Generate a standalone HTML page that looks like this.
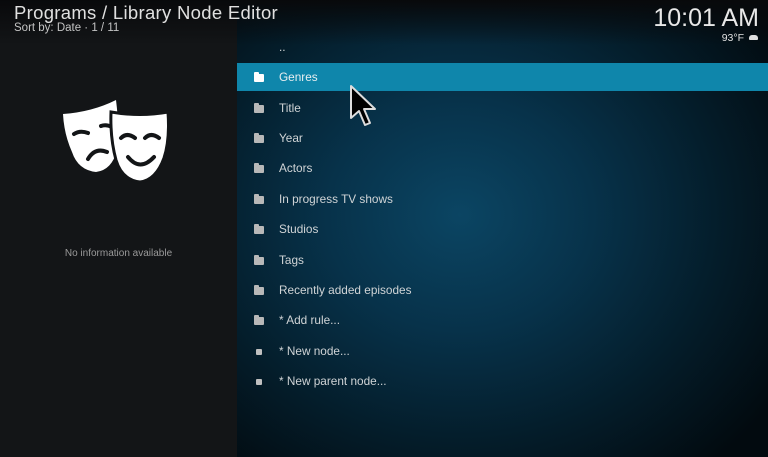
<!DOCTYPE html>
<html><head><meta charset="utf-8"><style>
*{margin:0;padding:0;box-sizing:border-box}
body{width:768px;height:457px;overflow:hidden;background:#02090d;font-family:"Liberation Sans",sans-serif;position:relative}
.bg{position:absolute;left:0;top:0;width:768px;height:457px;background:radial-gradient(ellipse 380px 330px at 460px 215px,#0b4563 0%,#07324a 35%,#041c29 70%,#020a0f 100%)}
.left{position:absolute;left:0;top:0;width:237px;height:457px;background:#131517}
.top{position:absolute;left:0;top:0;width:768px;height:45px;background:linear-gradient(#08090b,rgba(8,9,11,0))}
.title{position:absolute;left:14px;top:2px;font-size:18.5px;color:#e0e0e0;letter-spacing:.3px}
.sort{position:absolute;left:14px;top:22px;font-size:11.5px;color:#c4c4c4}
.clock{position:absolute;right:9px;top:4px;font-size:25px;color:#e8e8e8;font-weight:300}
.temp{position:absolute;right:24px;top:32px;font-size:10.5px;color:#e0e0e0}
.noinfo{position:absolute;left:0;width:237px;top:248px;text-align:center;font-size:10px;color:#9a9a9a}
.row{position:absolute;left:237px;width:531px;height:28px;font-size:11.8px;color:#d0d4d6;line-height:29px}
.row span{position:absolute;left:42px}
.row .ic{position:absolute;left:17px;top:11px;width:10px;height:8px;background:#b8b8b8;border-radius:1px}
.row .ic:before{content:"";position:absolute;left:0;top:-2px;width:5px;height:3px;background:#b8b8b8;border-radius:1px 1px 0 0}
.row .dot{position:absolute;left:19px;top:12px;width:6px;height:6px;background:#c0c0c0;border-radius:1px}
.sel{background:#0f86ab}
.sel span{color:#e8eef0}
.sel .ic,.sel .ic:before{background:#fff}
</style></head><body>
<div class="bg"></div>
<div class="left"></div>
<div class="top"></div>
<div class="title">Programs / Library Node Editor</div>
<div class="sort">Sort by: Date · 1 / 11</div>
<div class="clock">10:01 AM</div>
<div class="temp">93°F</div>
<div style="position:absolute;right:10px;top:35px;width:9px;height:5px;background:#e0e0e0;border-radius:3px 3px 1px 1px"></div>
<svg style="position:absolute;left:0;top:0" width="237" height="200" viewBox="0 0 237 200">
<path d="M63 114 Q92 112 116 100 Q120 132 117 150 Q112 170 96 172 Q78 170 72 152 Q64 134 63 114Z" fill="#fff"/>
<path d="M74 134 Q80 130 88 133" stroke="#131517" stroke-width="4" fill="none" stroke-linecap="round"/>
<path d="M101 126 Q106 124 112 127" stroke="#131517" stroke-width="4" fill="none" stroke-linecap="round"/>
<path d="M88 159 Q95 147 107 152" stroke="#131517" stroke-width="4" fill="none" stroke-linecap="round"/>
<path d="M111 112 Q140 117 168 112 Q170 140 164 158 Q156 180 140 182 Q122 180 116 160 Q110 138 111 112Z" fill="#fff" stroke="#131517" stroke-width="3"/>
<path d="M121 138 Q127 132 135 138" stroke="#131517" stroke-width="4" fill="none" stroke-linecap="round"/>
<path d="M145 138 Q151 132 159 138" stroke="#131517" stroke-width="4" fill="none" stroke-linecap="round"/>
<path d="M128 157 Q140 172 154 157" stroke="#131517" stroke-width="4" fill="none" stroke-linecap="round"/>
</svg>
<div class="noinfo">No information available</div>
<div class="row" style="top:33px"><span>..</span></div>
<div class="row sel" style="top:63px"><div class="ic"></div><span>Genres</span></div>
<div class="row" style="top:94px"><div class="ic"></div><span>Title</span></div>
<div class="row" style="top:124px"><div class="ic"></div><span>Year</span></div>
<div class="row" style="top:154px"><div class="ic"></div><span>Actors</span></div>
<div class="row" style="top:185px"><div class="ic"></div><span>In progress TV shows</span></div>
<div class="row" style="top:215px"><div class="ic"></div><span>Studios</span></div>
<div class="row" style="top:246px"><div class="ic"></div><span>Tags</span></div>
<div class="row" style="top:276px"><div class="ic"></div><span>Recently added episodes</span></div>
<div class="row" style="top:306px"><div class="ic"></div><span>* Add rule...</span></div>
<div class="row" style="top:337px"><div class="dot"></div><span>* New node...</span></div>
<div class="row" style="top:367px"><div class="dot"></div><span>* New parent node...</span></div>
<svg style="position:absolute;left:348px;top:84px" width="32" height="44" viewBox="0 0 32 44">
<path d="M3 2 L3 34 L11 27 L17 41 L22 39 L16 25 L27 25 Z" fill="#000" stroke="#ddd" stroke-width="2" stroke-linejoin="round"/>
</svg>
</body></html>
